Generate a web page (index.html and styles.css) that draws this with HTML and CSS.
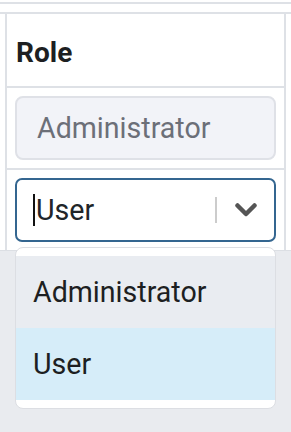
FILE: index.html
```html
<!doctype html>
<html lang="en">
  <head>
    <meta charset="utf-8">
    <title>Role</title>
    <link rel="stylesheet" href="styles.css">
  </head>
  <body>
    <div class="top-strip"></div>
    <div class="grid">
      <div class="cell header-cell">Role</div>
      <div class="cell">
        <div class="input disabled">Administrator</div>
      </div>
      <div class="cell">
        <div class="select">
          <span class="caret"></span>
          <span class="select-value">User</span>
          <span class="separator"></span>
          <svg class="chevron" width="22" height="14" viewBox="0 0 22 14">
            <polyline points="2.5,2.5 11,11 19.5,2.5" />
          </svg>
        </div>
      </div>
    </div>
    <div class="footer"></div>

    <ul class="menu">
      <li class="option hover">Administrator</li>
      <li class="option selected">User</li>
    </ul>
  </body>
</html>
```

FILE: styles.css
```css
html, body {
  margin: 0;
  padding: 0;
  height: 100%;
}

body {
  background: #ffffff;
  font-family: Roboto, "Liberation Sans", sans-serif;
  color: #212529;
  overflow: hidden;
  position: relative;
  display: flex;
  flex-direction: column;
}

.top-strip {
  margin-top: 2px;
  height: 8px;
  border-top: 2px solid #dee1e6;
  border-bottom: 2px solid #dee1e6;
}

.grid {
  margin-left: 5px;
  width: 277px;
  border-left: 2px solid #dee1e6;
  border-right: 2px solid #dee1e6;
}

.cell {
  padding: 8px;
  border-top: 2px solid #dee1e6;
}

.cell:first-child {
  border-top: none;
}

.header-cell {
  height: 72px;
  box-sizing: border-box;
  display: flex;
  align-items: center;
  padding: 4px 9px 0;
  font-weight: 700;
  font-size: 28px;
  color: #1d1f22;
}

.input {
  height: 64px;
  box-sizing: border-box;
  border: 2px solid #dfe1e7;
  border-radius: 8px;
  display: flex;
  align-items: center;
  padding-left: 20px;
  font-size: 28.6px;
}

.disabled {
  background: #f2f3f8;
  color: #6c6f78;
}

.select {
  height: 64px;
  box-sizing: border-box;
  border: 2.5px solid #346690;
  border-radius: 7px;
  display: flex;
  align-items: center;
  padding-left: 16px;
  font-size: 28.6px;
  color: #212529;
}

.caret {
  width: 2px;
  height: 32px;
  background: #111;
  margin-right: 1px;
}

.select-value {
  flex: 1;
}

.separator {
  width: 2px;
  height: 26px;
  background: #cccccc;
  margin-right: 18px;
}

.chevron {
  margin-right: 17px;
}

.chevron polyline {
  fill: none;
  stroke: #555555;
  stroke-width: 4.5;
  stroke-linecap: round;
  stroke-linejoin: round;
}

.footer {
  flex: 1;
  background: #e9ebef;
  border-top: 1px solid #dcdfe4;
}

.menu {
  position: absolute;
  left: 15px;
  top: 247px;
  width: 261px;
  box-sizing: border-box;
  margin: 0;
  padding: 8px 0;
  list-style: none;
  background: #ffffff;
  border: 1.5px solid #dcdee3;
  border-radius: 8px;
}

.option {
  height: 72px;
  display: flex;
  align-items: center;
  padding-left: 17px;
  font-size: 28.6px;
  color: #1d1f22;
}

.hover {
  background: #e9ecf1;
}

.selected {
  background: #d6edf9;
}
```
